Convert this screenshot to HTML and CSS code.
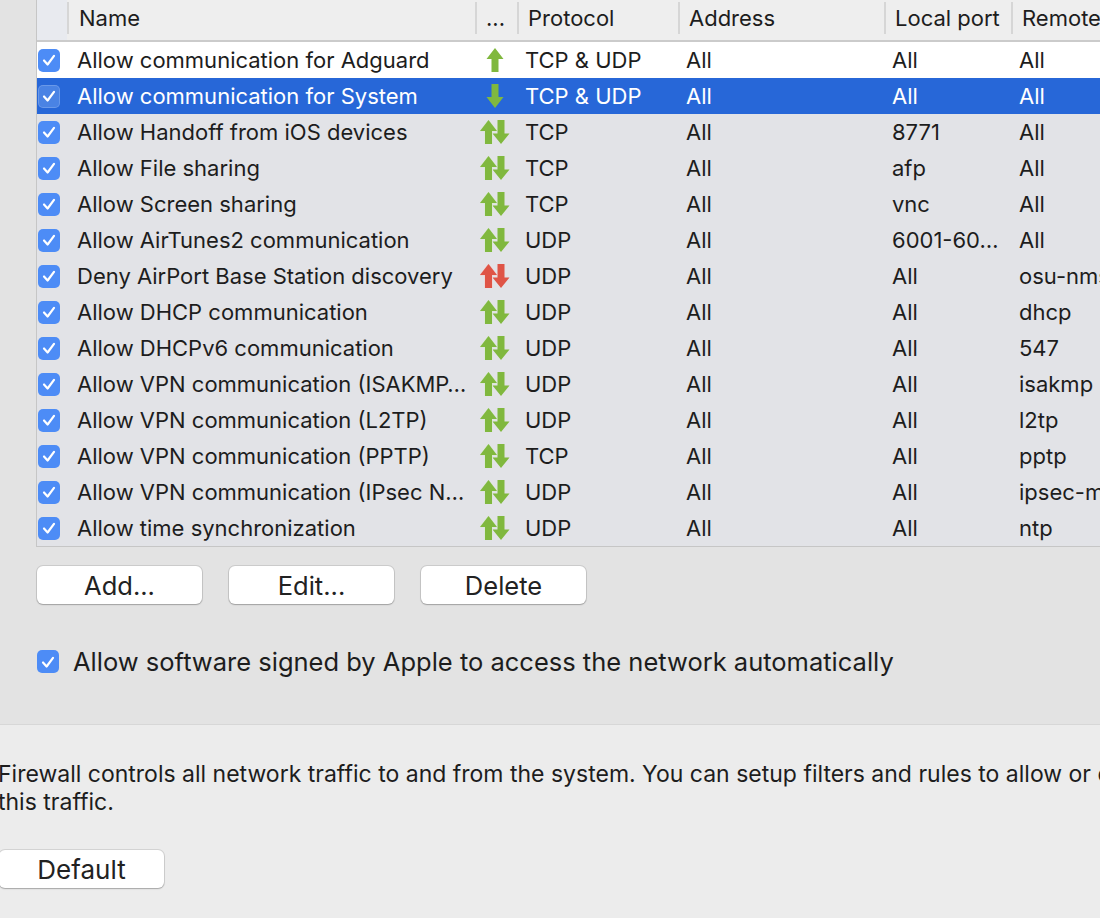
FILE: index.html
```html
<!DOCTYPE html>
<html>
<head>
<meta charset="utf-8">
<link rel="stylesheet" href="styles.css">
</head>
<body>
<div class="top">
  <div class="table">
    <div class="thead">
      <div class="th th-cb"></div>
      <div class="th th-name">Name</div>
      <div class="th">...</div>
      <div class="th">Protocol</div>
      <div class="th">Address</div>
      <div class="th">Local port</div>
      <div class="th">Remote port</div>
    </div>

    <div class="row first">
      <div class="cbcell"><span class="cb"><svg viewBox="0 0 22 22"><path d="M6 11.5l3.6 4L16 6.8"/></svg></span></div>
      <div class="cell name">Allow communication for Adguard</div>
      <div class="cell icon"><svg class="arr" viewBox="0 0 31 24"><polygon class="g" points="15,0 23.5,11 18.5,11 18.5,24 11.5,24 11.5,11 6.5,11"/></svg></div>
      <div class="cell">TCP &amp; UDP</div>
      <div class="cell">All</div>
      <div class="cell">All</div>
      <div class="cell">All</div>
    </div>

    <div class="row sel">
      <div class="cbcell"><span class="cb"><svg viewBox="0 0 22 22"><path d="M6 11.5l3.6 4L16 6.8"/></svg></span></div>
      <div class="cell name">Allow communication for System</div>
      <div class="cell icon"><svg class="arr" viewBox="0 0 31 24"><polygon class="g" points="15,24 23.5,13 18.5,13 18.5,0 11.5,0 11.5,13 6.5,13"/></svg></div>
      <div class="cell">TCP &amp; UDP</div>
      <div class="cell">All</div>
      <div class="cell">All</div>
      <div class="cell">All</div>
    </div>

    <div class="row">
      <div class="cbcell"><span class="cb"><svg viewBox="0 0 22 22"><path d="M6 11.5l3.6 4L16 6.8"/></svg></span></div>
      <div class="cell name">Allow Handoff from iOS devices</div>
      <div class="cell icon"><svg class="arr" viewBox="0 0 31 24"><g class="g"><polygon points="21,24 29.5,13.5 24.5,13.5 24.5,0 17.5,0 17.5,13.5 12.5,13.5"/><polygon class="up" points="8.5,0 17,11 12,11 12,24 5,24 5,11 0,11"/></g></svg></div>
      <div class="cell">TCP</div>
      <div class="cell">All</div>
      <div class="cell">8771</div>
      <div class="cell">All</div>
    </div>

    <div class="row">
      <div class="cbcell"><span class="cb"><svg viewBox="0 0 22 22"><path d="M6 11.5l3.6 4L16 6.8"/></svg></span></div>
      <div class="cell name">Allow File sharing</div>
      <div class="cell icon"><svg class="arr" viewBox="0 0 31 24"><g class="g"><polygon points="21,24 29.5,13.5 24.5,13.5 24.5,0 17.5,0 17.5,13.5 12.5,13.5"/><polygon class="up" points="8.5,0 17,11 12,11 12,24 5,24 5,11 0,11"/></g></svg></div>
      <div class="cell">TCP</div>
      <div class="cell">All</div>
      <div class="cell">afp</div>
      <div class="cell">All</div>
    </div>

    <div class="row">
      <div class="cbcell"><span class="cb"><svg viewBox="0 0 22 22"><path d="M6 11.5l3.6 4L16 6.8"/></svg></span></div>
      <div class="cell name">Allow Screen sharing</div>
      <div class="cell icon"><svg class="arr" viewBox="0 0 31 24"><g class="g"><polygon points="21,24 29.5,13.5 24.5,13.5 24.5,0 17.5,0 17.5,13.5 12.5,13.5"/><polygon class="up" points="8.5,0 17,11 12,11 12,24 5,24 5,11 0,11"/></g></svg></div>
      <div class="cell">TCP</div>
      <div class="cell">All</div>
      <div class="cell">vnc</div>
      <div class="cell">All</div>
    </div>

    <div class="row">
      <div class="cbcell"><span class="cb"><svg viewBox="0 0 22 22"><path d="M6 11.5l3.6 4L16 6.8"/></svg></span></div>
      <div class="cell name">Allow AirTunes2 communication</div>
      <div class="cell icon"><svg class="arr" viewBox="0 0 31 24"><g class="g"><polygon points="21,24 29.5,13.5 24.5,13.5 24.5,0 17.5,0 17.5,13.5 12.5,13.5"/><polygon class="up" points="8.5,0 17,11 12,11 12,24 5,24 5,11 0,11"/></g></svg></div>
      <div class="cell">UDP</div>
      <div class="cell">All</div>
      <div class="cell">6001-60…</div>
      <div class="cell">All</div>
    </div>

    <div class="row">
      <div class="cbcell"><span class="cb"><svg viewBox="0 0 22 22"><path d="M6 11.5l3.6 4L16 6.8"/></svg></span></div>
      <div class="cell name">Deny AirPort Base Station discovery</div>
      <div class="cell icon"><svg class="arr" viewBox="0 0 31 24"><g class="r"><polygon points="21,24 29.5,13.5 24.5,13.5 24.5,0 17.5,0 17.5,13.5 12.5,13.5"/><polygon class="up" points="8.5,0 17,11 12,11 12,24 5,24 5,11 0,11"/></g></svg></div>
      <div class="cell">UDP</div>
      <div class="cell">All</div>
      <div class="cell">All</div>
      <div class="cell">osu-nms</div>
    </div>

    <div class="row">
      <div class="cbcell"><span class="cb"><svg viewBox="0 0 22 22"><path d="M6 11.5l3.6 4L16 6.8"/></svg></span></div>
      <div class="cell name">Allow DHCP communication</div>
      <div class="cell icon"><svg class="arr" viewBox="0 0 31 24"><g class="g"><polygon points="21,24 29.5,13.5 24.5,13.5 24.5,0 17.5,0 17.5,13.5 12.5,13.5"/><polygon class="up" points="8.5,0 17,11 12,11 12,24 5,24 5,11 0,11"/></g></svg></div>
      <div class="cell">UDP</div>
      <div class="cell">All</div>
      <div class="cell">All</div>
      <div class="cell">dhcp</div>
    </div>

    <div class="row">
      <div class="cbcell"><span class="cb"><svg viewBox="0 0 22 22"><path d="M6 11.5l3.6 4L16 6.8"/></svg></span></div>
      <div class="cell name">Allow DHCPv6 communication</div>
      <div class="cell icon"><svg class="arr" viewBox="0 0 31 24"><g class="g"><polygon points="21,24 29.5,13.5 24.5,13.5 24.5,0 17.5,0 17.5,13.5 12.5,13.5"/><polygon class="up" points="8.5,0 17,11 12,11 12,24 5,24 5,11 0,11"/></g></svg></div>
      <div class="cell">UDP</div>
      <div class="cell">All</div>
      <div class="cell">All</div>
      <div class="cell">547</div>
    </div>

    <div class="row">
      <div class="cbcell"><span class="cb"><svg viewBox="0 0 22 22"><path d="M6 11.5l3.6 4L16 6.8"/></svg></span></div>
      <div class="cell name">Allow VPN communication (ISAKMP…</div>
      <div class="cell icon"><svg class="arr" viewBox="0 0 31 24"><g class="g"><polygon points="21,24 29.5,13.5 24.5,13.5 24.5,0 17.5,0 17.5,13.5 12.5,13.5"/><polygon class="up" points="8.5,0 17,11 12,11 12,24 5,24 5,11 0,11"/></g></svg></div>
      <div class="cell">UDP</div>
      <div class="cell">All</div>
      <div class="cell">All</div>
      <div class="cell">isakmp</div>
    </div>

    <div class="row">
      <div class="cbcell"><span class="cb"><svg viewBox="0 0 22 22"><path d="M6 11.5l3.6 4L16 6.8"/></svg></span></div>
      <div class="cell name">Allow VPN communication (L2TP)</div>
      <div class="cell icon"><svg class="arr" viewBox="0 0 31 24"><g class="g"><polygon points="21,24 29.5,13.5 24.5,13.5 24.5,0 17.5,0 17.5,13.5 12.5,13.5"/><polygon class="up" points="8.5,0 17,11 12,11 12,24 5,24 5,11 0,11"/></g></svg></div>
      <div class="cell">UDP</div>
      <div class="cell">All</div>
      <div class="cell">All</div>
      <div class="cell">l2tp</div>
    </div>

    <div class="row">
      <div class="cbcell"><span class="cb"><svg viewBox="0 0 22 22"><path d="M6 11.5l3.6 4L16 6.8"/></svg></span></div>
      <div class="cell name">Allow VPN communication (PPTP)</div>
      <div class="cell icon"><svg class="arr" viewBox="0 0 31 24"><g class="g"><polygon points="21,24 29.5,13.5 24.5,13.5 24.5,0 17.5,0 17.5,13.5 12.5,13.5"/><polygon class="up" points="8.5,0 17,11 12,11 12,24 5,24 5,11 0,11"/></g></svg></div>
      <div class="cell">TCP</div>
      <div class="cell">All</div>
      <div class="cell">All</div>
      <div class="cell">pptp</div>
    </div>

    <div class="row">
      <div class="cbcell"><span class="cb"><svg viewBox="0 0 22 22"><path d="M6 11.5l3.6 4L16 6.8"/></svg></span></div>
      <div class="cell name">Allow VPN communication (IPsec N…</div>
      <div class="cell icon"><svg class="arr" viewBox="0 0 31 24"><g class="g"><polygon points="21,24 29.5,13.5 24.5,13.5 24.5,0 17.5,0 17.5,13.5 12.5,13.5"/><polygon class="up" points="8.5,0 17,11 12,11 12,24 5,24 5,11 0,11"/></g></svg></div>
      <div class="cell">UDP</div>
      <div class="cell">All</div>
      <div class="cell">All</div>
      <div class="cell">ipsec-msft</div>
    </div>

    <div class="row">
      <div class="cbcell"><span class="cb"><svg viewBox="0 0 22 22"><path d="M6 11.5l3.6 4L16 6.8"/></svg></span></div>
      <div class="cell name">Allow time synchronization</div>
      <div class="cell icon"><svg class="arr" viewBox="0 0 31 24"><g class="g"><polygon points="21,24 29.5,13.5 24.5,13.5 24.5,0 17.5,0 17.5,13.5 12.5,13.5"/><polygon class="up" points="8.5,0 17,11 12,11 12,24 5,24 5,11 0,11"/></g></svg></div>
      <div class="cell">UDP</div>
      <div class="cell">All</div>
      <div class="cell">All</div>
      <div class="cell">ntp</div>
    </div>
  </div>

  <div class="actions">
    <button class="btn">Add...</button>
    <button class="btn">Edit...</button>
    <button class="btn">Delete</button>
  </div>

  <label class="auto">
    <span class="cb big"><svg viewBox="0 0 22 22"><path d="M6 11.5l3.6 4L16 6.8"/></svg></span>
    <span>Allow software signed by Apple to access the network automatically</span>
  </label>
</div>

<div class="bottom">
  <p class="desc">Firewall controls all network traffic to and from the system. You can setup filters and rules to allow or deny<br>this traffic.</p>
  <button class="btn default">Default</button>
</div>
</body>
</html>
```

FILE: styles.css
```css
* { box-sizing: border-box; }

html, body {
  margin: 0;
  padding: 0;
}

body {
  width: 1100px;
  height: 918px;
  overflow: hidden;
  background: #ececec;
  color: #1d1d1d;
  font-family: Inter, "Noto Sans", "Liberation Sans", sans-serif;
}

.top {
  height: 725px;
  background: #e3e3e3;
  padding-left: 36px;
  border-bottom: 1px solid #d7d7d7;
  overflow: hidden;
}

.table {
  width: 1250px;
  background: #e2e3e7;
  border-left: 1px solid #c6c6c6;
  border-bottom: 1px solid #c6c6c6;
}

.thead,
.row {
  display: grid;
  grid-template-columns: 30px 408px 42px 161px 206px 127px 200px;
}

.thead {
  height: 42px;
  background: #eeeeee;
  border-bottom: 2px solid #cbcbcb;
  align-items: start;
  font-size: 22px;
}

.th {
  height: 32px;
  margin-top: 2px;
  display: flex;
  align-items: center;
  padding-left: 9px;
  border-left: 2px solid #d6d6d6;
  white-space: nowrap;
}

.th-cb {
  height: 40px;
  margin-top: 0;
  border-left: none;
  background: #e8eaef;
}

.th-name {
  padding-left: 10px;
}

.row {
  height: 36px;
  align-items: center;
  font-size: 22px;
}

.row.first { background: #ffffff; }

.row.sel {
  background: #2767d8;
  color: #ffffff;
}

.cell {
  padding-left: 8px;
  white-space: nowrap;
  overflow: hidden;
}

.cell.name { padding-left: 10px; }

.cbcell {
  display: flex;
  align-items: center;
  padding-left: 1px;
}

.cb {
  width: 22px;
  height: 23px;
  border-radius: 5px;
  background: #4d8cf6;
  display: flex;
  align-items: center;
  justify-content: center;
  flex: none;
}

.cb svg {
  width: 22px;
  height: 22px;
}

.cb path {
  fill: none;
  stroke: #ffffff;
  stroke-width: 2.2;
  stroke-linecap: round;
  stroke-linejoin: round;
}

.sel .cb {
  background: #4a83e4;
  box-shadow: inset 0 0 0 1px rgba(255, 255, 255, 0.18);
}

.cell.icon {
  padding-left: 5px;
  display: flex;
  align-items: center;
}

.arr {
  width: 31px;
  height: 24px;
  display: block;
}

.g polygon, polygon.g { fill: #80b83e; }
.r polygon { fill: #df5446; }

.up {
  stroke: #d9ead0;
  stroke-width: 1;
  paint-order: stroke;
}

.r .up { stroke: #f3cdc9; }

.actions {
  display: flex;
  gap: 27px;
  margin: 19px 0 0 1px;
}

.btn {
  width: 165px;
  height: 38px;
  background: #ffffff;
  border: none;
  border-radius: 6px;
  box-shadow: 0 0 0 1px rgba(0, 0, 0, 0.1), 0 1px 1.5px rgba(0, 0, 0, 0.22);
  font-family: Inter, "Noto Sans", "Liberation Sans", sans-serif;
  font-size: 25.5px;
  color: #222222;
  padding: 0;
}

.auto {
  display: flex;
  align-items: center;
  gap: 14px;
  margin: 42px 0 0 1px;
  font-size: 25.5px;
  white-space: nowrap;
}

.bottom {
  padding-top: 35px;
}

.desc {
  margin: 0 0 0 -2px;
  font-size: 23px;
  line-height: 28px;
  white-space: nowrap;
}

.default {
  display: block;
  margin: 34px 0 0 -1px;
  font-size: 26px;
}
```
